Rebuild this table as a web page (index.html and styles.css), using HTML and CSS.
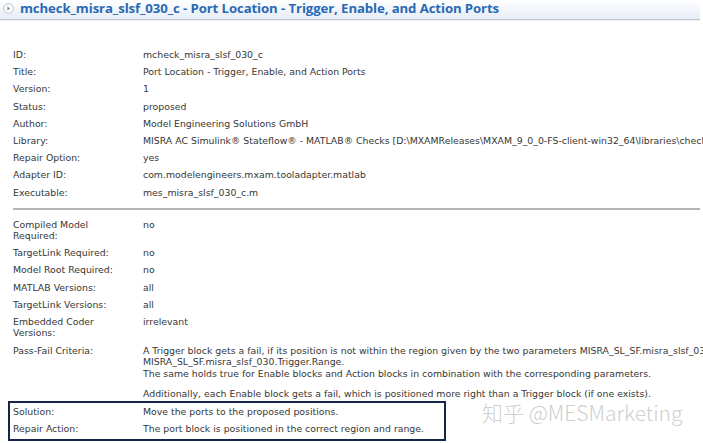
FILE: index.html
```html
<!DOCTYPE html>
<html lang="en">
<head>
    <meta charset="UTF-8">
    <title>mcheck_misra_slsf_030_c</title>
    <link rel="stylesheet" href="styles.css">
</head>
<body>
    <header class="titlebar">
        <svg class="twisty" width="11" height="11" viewBox="0 0 11 11">
            <circle cx="5.5" cy="5.5" r="4.8" fill="#fff" stroke="#b9bfc6" stroke-width="1"/>
            <path d="M4.4 3.3 L7.2 5.5 L4.4 7.7 Z" fill="#8a9098"/>
        </svg>
        <h1>mcheck_misra_slsf_030_c - Port Location - Trigger, Enable, and Action Ports</h1>
    </header>

    <div class="content">
        <div class="props">
            <div class="label">ID:</div><div class="value">mcheck_misra_slsf_030_c</div>
            <div class="label">Title:</div><div class="value">Port Location - Trigger, Enable, and Action Ports</div>
            <div class="label">Version:</div><div class="value">1</div>
            <div class="label">Status:</div><div class="value">proposed</div>
            <div class="label">Author:</div><div class="value">Model Engineering Solutions GmbH</div>
            <div class="label">Library:</div><div class="value">MISRA AC Simulink&reg; Stateflow&reg; - MATLAB&reg; Checks [D:\MXAMReleases\MXAM_9_0_0-FS-client-win32_64\libraries\checks\misra_ac_slsf.xml]</div>
            <div class="label">Repair Option:</div><div class="value">yes</div>
            <div class="label">Adapter ID:</div><div class="value">com.modelengineers.mxam.tooladapter.matlab</div>
            <div class="label">Executable:</div><div class="value">mes_misra_slsf_030_c.m</div>
        </div>

        <hr class="sep">

        <div class="props tall">
            <div class="label">Compiled Model Required:</div><div class="value">no</div>
            <div class="label">TargetLink Required:</div><div class="value">no</div>
            <div class="label">Model Root Required:</div><div class="value">no</div>
            <div class="label">MATLAB Versions:</div><div class="value">all</div>
            <div class="label">TargetLink Versions:</div><div class="value">all</div>
            <div class="label">Embedded Coder Versions:</div><div class="value">irrelevant</div>
            <div class="label">Pass-Fail Criteria:</div>
            <div class="value">
                <p>A Trigger block gets a fail, if its position is not within the region given by the two parameters MISRA_SL_SF.misra_slsf_030.Trigger.Position and<br>
                MISRA_SL_SF.misra_slsf_030.Trigger.Range.<br>
                The same holds true for Enable blocks and Action blocks in combination with the corresponding parameters.</p>
                <p class="more">Additionally, each Enable block gets a fail, which is positioned more right than a Trigger block (if one exists).</p>
            </div>
        </div>

        <div class="props highlight">
            <div class="label">Solution:</div><div class="value">Move the ports to the proposed positions.</div>
            <div class="label">Repair Action:</div><div class="value">The port block is positioned in the correct region and range.</div>
        </div>
    </div>

    <div class="watermark">知乎 @MESMarketing</div>
</body>
</html>
```

FILE: styles.css
```css
html, body {
    margin: 0;
    padding: 0;
    background: #fff;
    overflow: hidden;
}
body {
    width: 703px;
    height: 443px;
    position: relative;
    font-family: "DejaVu Sans", Verdana, sans-serif;
    font-size: 9.35px;
    color: #363636;
}
.titlebar {
    display: flex;
    align-items: center;
    gap: 6px;
    width: 700px;
    height: 20px;
    padding: 0 0 3px 3px;
    box-sizing: border-box;
    background: linear-gradient(#ffffff, #e6edf6);
    border-bottom: 1px solid #bcc8d6;
    box-shadow: 0 1px 0 #eef2f7;
}
.titlebar h1 {
    margin: 0;
    font-family: "Open Sans", "Noto Sans", sans-serif;
    font-weight: 700;
    font-size: 13.2px;
    line-height: 16px;
    color: #2a69b4;
    white-space: nowrap;
    letter-spacing: -0.1px;
}
.twisty {
    flex: none;
}
.content {
    padding: 26px 0 0 13px;
}
.props {
    display: grid;
    grid-template-columns: 130px 1fr;
    line-height: 11px;
}
.props .label {
    padding: 3.1px 18px 3.1px 0;
}
.props .value {
    padding: 3.1px 0;
    white-space: nowrap;
}
.props.tall {
    line-height: 11.5px;
}
.props.tall .label {
    padding: 2.85px 18px 2.85px 0;
}
.props.tall .value {
    padding: 2.85px 0;
}
.props p {
    margin: 0;
}
.props p.more {
    margin-top: 9px;
}
.sep {
    margin: 7px 3px 6px 0;
    border: none;
    height: 2px;
    background: #b5b5b5;
}
.props.highlight {
    margin-top: -2px;
    margin-left: -5px;
    padding: 0 0 2px 3px;
    width: 431px;
    border: 2px solid #14264a;
}
.watermark {
    position: absolute;
    left: 482px;
    top: 397px;
    font-family: "Noto Sans CJK SC", "Noto Sans", sans-serif;
    font-weight: 300;
    font-size: 21px;
    color: #cfcfcf;
    white-space: nowrap;
}
```
